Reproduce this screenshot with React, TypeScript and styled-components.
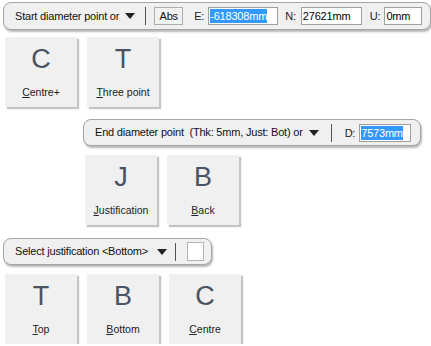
import React from "react";
import styled, { createGlobalStyle } from "styled-components";

const Global = createGlobalStyle`
  html, body { margin: 0; padding: 0; background: #ffffff; }
  body { font-family: "Liberation Sans", Arial, sans-serif; }
`;

const Page = styled.div`
  display: flex;
  flex-direction: column;
  align-items: flex-start;
  padding: 2px 0 0 3px;
`;

const Group = styled.div<{ $indent: number; $gap: number }>`
  display: flex;
  flex-direction: column;
  align-items: flex-start;
  margin-left: ${(p) => p.$indent}px;
  margin-top: ${(p) => p.$gap}px;
`;

const Bar = styled.div<{ $h: number; $pr: number }>`
  display: flex;
  align-items: center;
  height: ${(p) => p.$h}px;
  box-sizing: border-box;
  padding: 0 ${(p) => p.$pr}px 0 11px;
  background: #f0f0f0;
  border: 1px solid #a4a4a4;
  border-radius: 8px;
  box-shadow: 1px 2px 2px rgba(0, 0, 0, 0.28);
  font-size: 11px;
  letter-spacing: -0.2px;
  color: #111;
  white-space: pre;
`;

const Prompt = styled.span`
  line-height: 1;
`;

const Caret = styled.span<{ $ml: number }>`
  width: 0;
  height: 0;
  margin-left: ${(p) => p.$ml}px;
  border-left: 5px solid transparent;
  border-right: 5px solid transparent;
  border-top: 6px solid #222;
`;

const Sep = styled.span<{ $ml: number; $mr: number }>`
  width: 1px;
  height: 18px;
  background: #555;
  margin: 0 ${(p) => p.$mr}px 0 ${(p) => p.$ml}px;
`;

const AbsBtn = styled.span`
  display: flex;
  align-items: center;
  justify-content: center;
  width: 29px;
  height: 18px;
  box-sizing: border-box;
  border: 1px solid #adadad;
  background: #f2f2f2;
  margin-right: 11px;
`;

const FieldLabel = styled.span<{ $mr: number }>`
  color: #222;
  margin-right: ${(p) => p.$mr}px;
`;

const Input = styled.span<{ $w: number; $mr?: number }>`
  display: flex;
  align-items: center;
  width: ${(p) => p.$w}px;
  height: 18px;
  box-sizing: border-box;
  background: #fff;
  border: 1px solid #a0a0a0;
  padding-left: 1px;
  margin-right: ${(p) => p.$mr ?? 0}px;
  color: #000;
`;

const Sel = styled.span`
  background: #3399ff;
  color: #fff;
  line-height: 14px;
`;

const EmptyBox = styled.span`
  width: 17px;
  height: 19px;
  background: #fff;
  border: 1px solid #b4b4b4;
  box-sizing: border-box;
`;

const Row = styled.div<{ $top: number }>`
  display: flex;
  gap: 10px;
  margin-top: ${(p) => p.$top}px;
  margin-left: 2px;
`;

const Key = styled.div`
  width: 72px;
  height: 70px;
  box-sizing: border-box;
  background: #f0f0f0;
  box-shadow: 2px 2px 1px #c4c4c4;
  display: flex;
  flex-direction: column;
  align-items: center;
`;

const Letter = styled.span`
  margin-top: 6px;
  font-family: "Liberation Sans", Arial, sans-serif;
  font-size: 27px;
  line-height: 32px;
  color: #4a5361;
`;

const Label = styled.span`
  margin-top: 11px;
  font-size: 10.5px;
  color: #222;
  white-space: nowrap;
`;

const KeyButton = ({ letter, label }: { letter: string; label: string }) => (
  <Key>
    <Letter>{letter}</Letter>
    <Label>
      <u>{label[0]}</u>
      {label.slice(1)}
    </Label>
  </Key>
);

export default function App() {
  return (
    <>
      <Global />
      <Page>
        <Group $indent={0} $gap={0}>
          <Bar $h={28} $pr={8}>
            <Prompt>Start diameter point or</Prompt>
            <Caret $ml={6} />
            <Sep $ml={10} $mr={8} />
            <AbsBtn>Abs</AbsBtn>
            <FieldLabel $mr={4}>E:</FieldLabel>
            <Input $w={70} $mr={7}>
              <Sel>-618308mm</Sel>
            </Input>
            <FieldLabel $mr={5}>N:</FieldLabel>
            <Input $w={61} $mr={8}>27621mm</Input>
            <FieldLabel $mr={4}>U:</FieldLabel>
            <Input $w={38}>0mm</Input>
          </Bar>
          <Row $top={7}>
            <KeyButton letter="C" label="Centre+" />
            <KeyButton letter="T" label="Three point" />
          </Row>
        </Group>
        <Group $indent={80} $gap={12}>
          <Bar $h={27} $pr={9}>
            <Prompt>{"End diameter point  (Thk: 5mm, Just: Bot) or"}</Prompt>
            <Caret $ml={6} />
            <Sep $ml={12} $mr={13} />
            <FieldLabel $mr={4}>D:</FieldLabel>
            <Input $w={52}>
              <Sel>7573mm</Sel>
            </Input>
          </Bar>
          <Row $top={9}>
            <KeyButton letter="J" label="Justification" />
            <KeyButton letter="B" label="Back" />
          </Row>
        </Group>
        <Group $indent={0} $gap={13}>
          <Bar $h={27} $pr={7}>
            <Prompt>{"Select justification <Bottom>"}</Prompt>
            <Caret $ml={9} />
            <Sep $ml={8} $mr={11} />
            <EmptyBox />
          </Bar>
          <Row $top={9}>
            <KeyButton letter="T" label="Top" />
            <KeyButton letter="B" label="Bottom" />
            <KeyButton letter="C" label="Centre" />
          </Row>
        </Group>
      </Page>
    </>
  );
}
